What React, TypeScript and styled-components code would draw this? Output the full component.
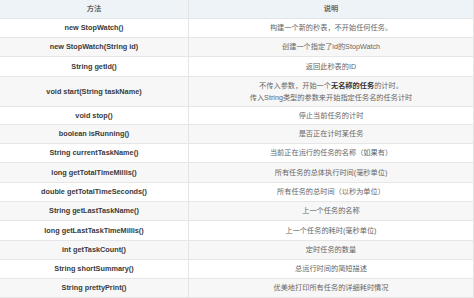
import React from "react";
import styled, { createGlobalStyle } from "styled-components";

const Global = createGlobalStyle`
  html, body { margin: 0; padding: 0; background: #ffffff; }
  body { font-family: "Liberation Sans", "Noto Sans CJK SC", Arial, sans-serif; }
`;

const Table = styled.div`
  width: 474px;
  display: flex;
  flex-direction: column;
  border-right: 1px solid #e4e4e4;
  box-sizing: border-box;
`;

const Row = styled.div<{ $h: number; $tone: "head" | "odd" | "even" }>`
  display: grid;
  grid-template-columns: 189px 1fr;
  height: ${(p) => p.$h}px;
  box-sizing: border-box;
  border-bottom: 1px solid #e6e6e6;
  background: ${(p) =>
    p.$tone === "head" ? "#eef3f7" : p.$tone === "even" ? "#f7f7f7" : "#ffffff"};
`;

const Cell = styled.div<{ $method?: boolean; $head?: boolean }>`
  display: flex;
  flex-direction: column;
  align-items: center;
  justify-content: center;
  text-align: center;
  box-sizing: border-box;
  border-right: ${(p) => (p.$method ? "1px solid #e4e4e4" : "none")};
  font-family: "Liberation Sans", "Noto Sans CJK SC", Arial, sans-serif;
  font-size: ${(p) => (p.$method ? "7.3px" : "7.2px")};
  font-weight: ${(p) => (p.$method || p.$head ? 700 : 400)};
  color: ${(p) => (p.$head ? "#666" : p.$method ? "#3a3a3a" : "#666")};
  line-height: 12px;
  white-space: nowrap;
`;

const Strong = styled.b`
  font-weight: 700;
  color: #333;
`;

type Item = { m: string; d: React.ReactNode; h?: number };

const items: Item[] = [
  { m: "new StopWatch()", d: "构建一个新的秒表，不开始任何任务。" },
  { m: "new StopWatch(String id)", d: "创建一个指定了id的StopWatch" },
  { m: "String getId()", d: "返回此秒表的ID", h: 20 },
  {
    m: "void start(String taskName)",
    d: (
      <>
        <span>
          不传入参数，开始一个<Strong>无名称的任务</Strong>的计时。
        </span>
        <span>传入String类型的参数来开始指定任务名的任务计时</span>
      </>
    ),
    h: 30,
  },
  { m: "void stop()", d: "停止当前任务的计时", h: 18 },
  { m: "boolean isRunning()", d: "是否正在计时某任务" },
  { m: "String currentTaskName()", d: "当前正在运行的任务的名称（如果有）" },
  { m: "long getTotalTimeMillis()", d: "所有任务的总体执行时间(毫秒单位)", h: 20 },
  { m: "double getTotalTimeSeconds()", d: "所有任务的总时间（以秒为单位）" },
  { m: "String getLastTaskName()", d: "上一个任务的名称" },
  { m: "long getLastTaskTimeMillis()", d: "上一个任务的耗时(毫秒单位)", h: 20 },
  { m: "int getTaskCount()", d: "定时任务的数量" },
  { m: "String shortSummary()", d: "总运行时间的简短描述" },
  { m: "String prettyPrint()", d: "优美地打印所有任务的详细耗时情况" },
];

export default function App() {
  return (
    <>
      <Global />
      <Table>
        <Row $h={19} $tone="head">
          <Cell $method $head>方法</Cell>
          <Cell $head>说明</Cell>
        </Row>
        {items.map((it, i) => (
          <Row key={it.m} $h={it.h ?? 19} $tone={i % 2 === 0 ? "odd" : "even"}>
            <Cell $method>{it.m}</Cell>
            <Cell>{it.d}</Cell>
          </Row>
        ))}
      </Table>
    </>
  );
}
